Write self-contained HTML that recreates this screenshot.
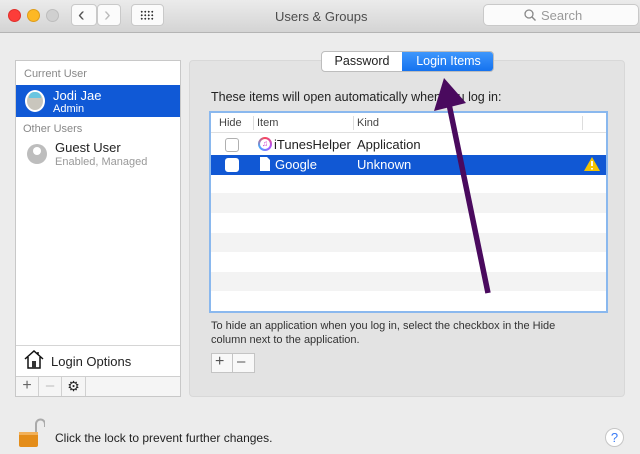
<!DOCTYPE html>
<html><head><meta charset="utf-8"><style>
*{box-sizing:border-box;margin:0;padding:0}
body{width:640px;height:454px;background:#ececec;font-family:"Liberation Sans",sans-serif;font-size:12px;color:#222;position:relative;overflow:hidden}
.abs{position:absolute}
.tb{left:0;top:0;width:640px;height:33px;background:linear-gradient(#ebebeb,#d4d4d4);border-bottom:1px solid #b4b4b4}
.dot{width:13px;height:13px;border-radius:50%;top:9px}
.btn{background:#fbfbfb;border:1px solid #c9c9c9;border-radius:4px;height:22px;top:4px}
.lp{left:15px;top:60px;width:166px;height:337px;background:#fff;border:1px solid #c8c8c8}
.rp{left:189px;top:60px;width:436px;height:337px;background:#e3e3e3;border-radius:4px;border:1px solid #d8d8d8}
.tbl{left:209px;top:111px;width:399px;height:202px;border:2px solid #8ab8ee;background:#fff;overflow:hidden}
.row{position:absolute;left:0;width:395px;height:19.6px}
.cb{position:absolute;left:14px;width:14px;height:14px;border:1px solid #b0b0b0;border-radius:3px;background:#fff}
</style></head><body>
<div class="abs tb"></div>
<div class="abs dot" style="left:8px;background:#fc3d39;border:1px solid #e0302c"></div>
<div class="abs dot" style="left:27px;background:#fdb825;border:1px solid #de9d1b"></div>
<div class="abs dot" style="left:46px;background:#d0d0d0;border:1px solid #bdbdbd"></div>
<div class="abs btn" style="left:71px;width:26px"></div>
<div class="abs btn" style="left:97px;width:24px"></div>
<div class="abs" style="left:78px;top:4px;font-size:20px;color:#555">&#8249;</div>
<div class="abs" style="left:104px;top:4px;font-size:20px;color:#bbb">&#8250;</div>
<div class="abs btn" style="left:131px;width:33px"></div>
<div class="abs" style="left:140px;top:10px;width:14px;height:10px;background-image:radial-gradient(circle,#333 0.9px,transparent 1.1px);background-size:3.5px 3.5px"></div>
<div class="abs" style="left:275px;top:9px;font-size:13px;color:#4d4d4d">Users &amp; Groups</div>
<div class="abs btn" style="left:483px;width:156px;border-radius:5px"></div>
<svg class="abs" style="left:524px;top:9px" width="12" height="12"><circle cx="5" cy="5" r="4" fill="none" stroke="#888" stroke-width="1.3"/><path d="M8 8l3.5 3.5" stroke="#888" stroke-width="1.4"/></svg>
<div class="abs" style="left:541px;top:8px;font-size:13px;color:#999">Search</div>

<div class="abs lp"></div>
<div class="abs" style="left:24px;top:68px;font-size:11px;color:#888">Current User</div>
<div class="abs" style="left:16px;top:85px;width:164px;height:32px;background:#1059d6"></div>
<div class="abs" style="left:25px;top:90px;width:20px;height:22px;border-radius:50%;background:#c9c6bd;border:2px solid #fff"></div>
<div class="abs" style="left:29px;top:92px;width:12px;height:6px;background:#69c5e0;border-radius:5px 5px 0 0"></div>
<div class="abs" style="left:53px;top:88px;font-size:13px;color:#fff">Jodi Jae</div>
<div class="abs" style="left:53px;top:103px;font-size:11px;color:#fff">Admin</div>
<div class="abs" style="left:23px;top:123px;font-size:11px;color:#888">Other Users</div>
<div class="abs" style="left:27px;top:144px;width:20px;height:20px;border-radius:50%;background:#bdbdbd"></div>
<div class="abs" style="left:33px;top:147px;width:8px;height:8px;border-radius:50%;background:#fff"></div>
<div class="abs" style="left:55px;top:140px;font-size:13px;color:#222">Guest User</div>
<div class="abs" style="left:55px;top:156px;font-size:11px;color:#999">Enabled, Managed</div>
<div class="abs" style="left:16px;top:345px;width:164px;height:1px;background:#d5d5d5"></div>
<svg class="abs" style="left:23px;top:348px" width="22" height="22"><path d="M2 11L11 3l9 8M5 9v11h12V9M15 4v3" fill="none" stroke="#111" stroke-width="1.5"/><rect x="9" y="13" width="4" height="7" fill="#333"/></svg>
<div class="abs" style="left:51px;top:354px;font-size:13px;color:#222">Login Options</div>
<div class="abs" style="left:16px;top:376px;width:164px;height:20px;background:#f5f5f5;border-top:1px solid #cfcfcf"></div>
<div class="abs" style="left:16px;top:377px;width:23px;height:19px;border-right:1px solid #d0d0d0;text-align:center;font-size:16px;line-height:18px;color:#666">+</div>
<div class="abs" style="left:39px;top:377px;width:23px;height:19px;border-right:1px solid #d0d0d0;text-align:center;font-size:15px;line-height:18px;color:#bbb">&#8211;</div>
<div class="abs" style="left:62px;top:377px;width:24px;height:19px;border-right:1px solid #d0d0d0;text-align:center;font-size:14px;line-height:19px;color:#222">&#9881;</div>

<div class="abs rp"></div>
<div class="abs" style="left:321px;top:51px;width:173px;height:21px;border:1px solid #bdbdbd;border-radius:4px;background:#fff;overflow:hidden">
<div class="abs" style="left:0;top:0;width:80px;height:19px;text-align:center;line-height:19px;font-size:12.5px;color:#222">Password</div>
<div class="abs" style="left:80px;top:0;width:93px;height:19px;background:linear-gradient(#3e97fc,#1572ef);text-align:center;line-height:19px;font-size:12.5px;color:#fff">Login Items</div>
</div>
<div class="abs" style="left:211px;top:90px;font-size:12.5px;color:#222">These items will open automatically when you log in:</div>
<div class="abs tbl">
<div class="row" style="top:0;height:20px;border-bottom:1px solid #e0e0e0;color:#444;font-size:11px;line-height:20px">
<span class="abs" style="left:8px">Hide</span><span class="abs" style="left:42px;top:3px;height:14px;border-left:1px solid #ddd"></span>
<span class="abs" style="left:46px">Item</span><span class="abs" style="left:142px;top:3px;height:14px;border-left:1px solid #ddd"></span>
<span class="abs" style="left:146px">Kind</span><span class="abs" style="left:371px;top:3px;height:14px;border-left:1px solid #ddd"></span></div>
<div class="row" style="top:22px"><div class="cb" style="top:3px"></div>
<div class="abs" style="left:47px;top:2px;width:14px;height:14px;border-radius:50%;background:conic-gradient(#f45,#a5f,#4af,#f45);"></div><div class="abs" style="left:49px;top:4px;width:10px;height:10px;border-radius:50%;background:#fff;font-size:8px;text-align:center;line-height:10px;color:#c3c">&#9835;</div>
<span class="abs" style="left:63px;top:2px;font-size:13px">iTunesHelper</span><span class="abs" style="left:146px;top:2px;font-size:13px">Application</span></div>
<div class="row" style="top:42px;background:#1158d4;color:#fff"><div class="cb" style="top:3px;border-color:#fff"></div>
<svg class="abs" style="left:48px;top:1px" width="12" height="16"><path d="M1 1h7l3 3v11H1z" fill="#fff"/></svg>
<span class="abs" style="left:64px;top:2px;font-size:13px">Google</span><span class="abs" style="left:146px;top:2px;font-size:13px">Unknown</span>
<svg class="abs" style="left:373px;top:2px" width="16" height="14"><path d="M8 0L16 14H0z" fill="#f5c400"/><path d="M8 4v5M8 11v1.5" stroke="#fff" stroke-width="1.8"/></svg></div>
<div class="row" style="top:80px;background:#f3f3f3"></div>
<div class="row" style="top:119.5px;background:#f3f3f3"></div>
<div class="row" style="top:158.5px;background:#f3f3f3"></div>
</div>
<div class="abs" style="left:211px;top:319px;font-size:11px;color:#333;line-height:14px">To hide an application when you log in, select the checkbox in the Hide<br>column next to the application.</div>
<div class="abs" style="left:211px;top:353px;width:44px;height:20px;border:1px solid #c4c4c4;background:#f8f8f8"></div>
<div class="abs" style="left:232px;top:353px;width:1px;height:20px;background:#c4c4c4"></div>
<div class="abs" style="left:215px;top:353px;font-size:16px;color:#555">+</div>
<div class="abs" style="left:237px;top:353px;font-size:15px;color:#555">&#8211;</div>

<svg class="abs" style="left:0;top:0" width="640" height="454"><path d="M488 293L449 104" stroke="#4a0a5e" stroke-width="5.5"/><path d="M444 78L434 111L466 103z" fill="#4a0a5e"/></svg>

<svg class="abs" style="left:17px;top:415px" width="28" height="34"><path d="M19 17V9a4.5 4.5 0 0 1 9 0v3" fill="none" stroke="#aaa" stroke-width="2"/><rect x="2" y="17" width="19" height="15" rx="2" fill="#e48d1a"/><rect x="2" y="17" width="19" height="3" fill="#f2b15a"/></svg>
<div class="abs" style="left:55px;top:431px;font-size:12px;color:#222">Click the lock to prevent further changes.</div>
<div class="abs" style="left:605px;top:428px;width:19px;height:19px;border-radius:50%;background:#fff;border:1px solid #c6c6c6;text-align:center;color:#3a7bf5;font-size:13px;line-height:17px">?</div>
</body></html>
